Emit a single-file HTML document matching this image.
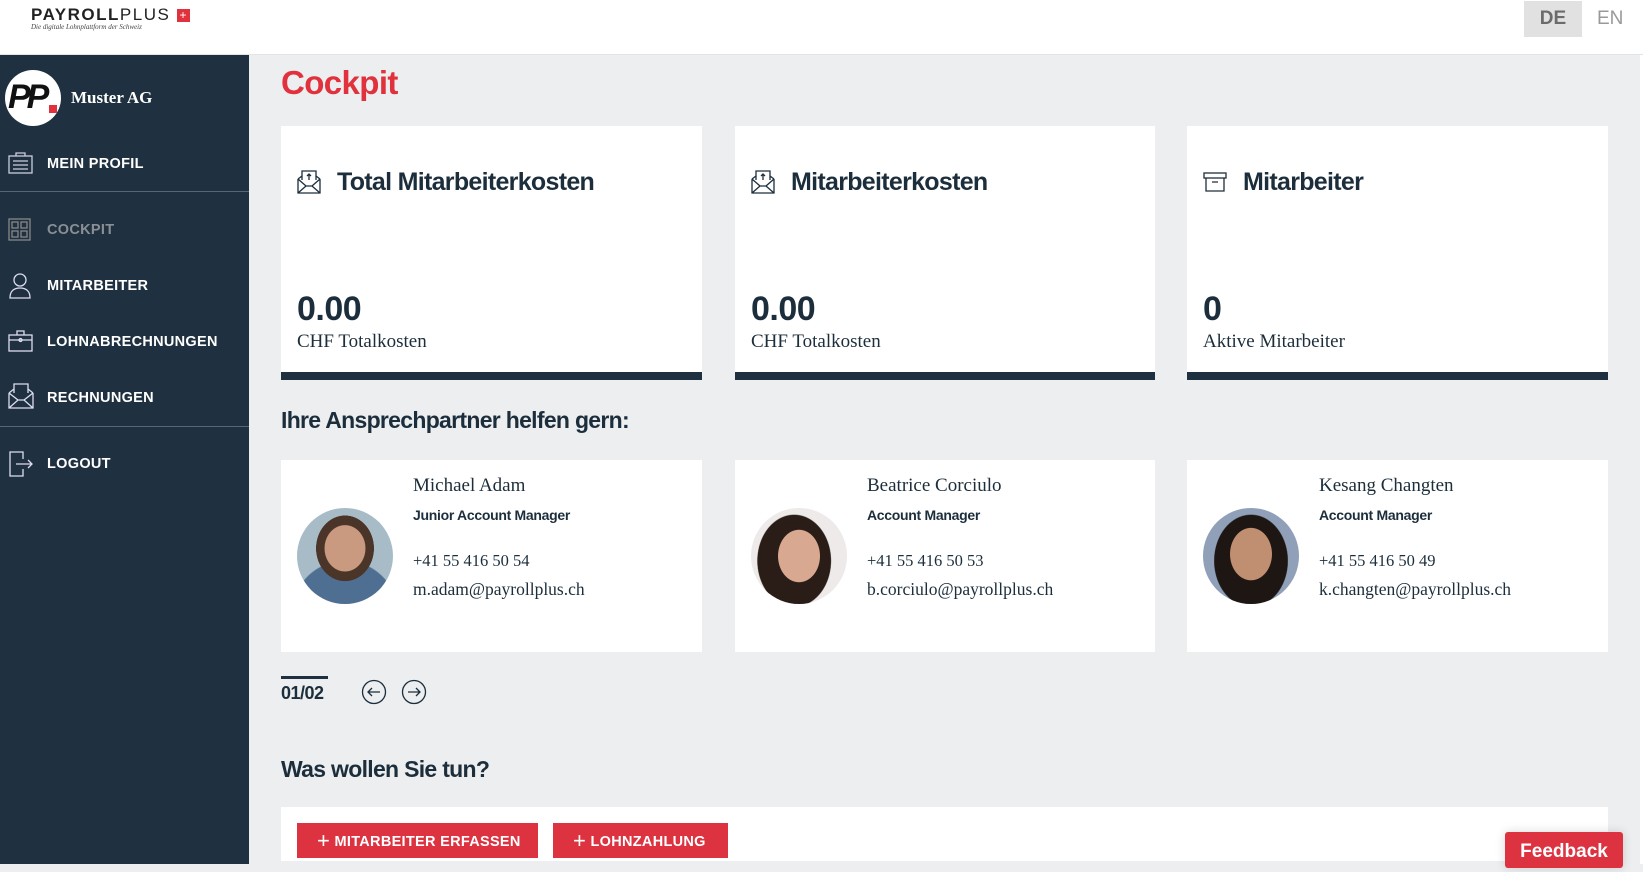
<!DOCTYPE html>
<html><head><meta charset="utf-8"><style>
*{margin:0;padding:0;box-sizing:border-box}
body{width:1643px;height:864px;overflow:hidden;background:#eceef0;font-family:"Liberation Sans",sans-serif;color:#1c2e3b;position:relative}
.abs{position:absolute}
.hdr{left:0;top:0;width:1643px;height:55px;background:#fff;border-bottom:1px solid #e2e4e6}
.side{left:0;top:55px;width:249px;height:809px;background:#1f3140}
.nav{position:absolute;left:47px;font-weight:bold;font-size:14.5px;letter-spacing:.3px;color:#fff}
.ico{position:absolute;left:8px}
.div{position:absolute;left:0;width:249px;height:1px;background:#55657a}
.card{background:#fff;border-bottom:8px solid #1f3140}
.ct{position:absolute;left:56px;top:42px;font-size:25px;font-weight:bold;letter-spacing:-.7px}
.ci{position:absolute;left:16px;top:44px}
.val{position:absolute;left:16px;top:164px;font-size:34px;font-weight:bold;letter-spacing:-.5px}
.sub{position:absolute;left:16px;top:205px;font-family:"Liberation Serif",serif;font-size:19px}
.pc{background:#fff}
.pc .ph{position:absolute;left:16px;top:48px;width:96px;height:96px;border-radius:50%}
.pc .n{position:absolute;left:132px;top:15px;font-family:"Liberation Serif",serif;font-size:19px}
.pc .r{position:absolute;left:132px;top:47px;font-size:14px;font-weight:bold;letter-spacing:-.3px}
.pc .t{position:absolute;left:132px;top:91px;font-family:"Liberation Serif",serif;font-size:16.5px}
.pc .e{position:absolute;left:132px;top:119px;font-family:"Liberation Serif",serif;font-size:17.5px}
.btn{background:#dd3340;color:#fff;font-weight:bold;font-size:14.5px;letter-spacing:.3px;height:35px;line-height:35px;top:823px}
</style></head><body>
<div class="abs hdr">
 <div class="abs" style="left:31px;top:5px;font-size:17px;letter-spacing:1.5px;color:#222"><b>PAYROLL</b>PLUS <span style="display:inline-block;width:13px;height:13px;background:#e0313c;color:#fff;font-size:12px;line-height:13px;text-align:center;letter-spacing:0;vertical-align:1px">+</span></div>
 <div class="abs" style="left:31px;top:23px;font-size:7px;font-style:italic;font-family:'Liberation Serif',serif;color:#444">Die digitale Lohnplattform der Schweiz</div>
 <div class="abs" style="left:1524px;top:1px;width:58px;height:36px;background:#e1e1e1;color:#6b6b6b;font-weight:bold;font-size:19px;text-align:center;line-height:36px">DE</div>
 <div class="abs" style="left:1597px;top:1px;height:36px;line-height:36px;color:#999;font-size:19px">EN</div>
</div>
<div class="abs" style="left:1640px;top:55px;width:3px;height:809px;background:#fff"></div>
<div class="abs side">
 <div class="abs" style="left:5px;top:15px;width:56px;height:56px;border-radius:50%;background:#fff;overflow:hidden"><div style="position:absolute;left:3px;top:8px;font-size:34px;font-weight:bold;color:#111;letter-spacing:-4px;font-style:italic">PP</div><div style="position:absolute;left:44px;top:35px;width:8px;height:8px;background:#e0313c"></div></div>
 <div class="abs" style="left:71px;top:33px;color:#fff;font-family:'Liberation Serif',serif;font-weight:bold;font-size:17px">Muster AG</div>
 <svg class="ico" style="top:97px" width="26" height="22" viewBox="0 0 26 22" fill="none" stroke="#ccd" stroke-width="1.3"><rect x="1" y="4" width="23" height="17"/><path d="M8 4V1h9v3M5 9h15M5 13h15M5 17h15"/></svg>
 <div class="nav" style="top:101px">MEIN PROFIL</div>
 <div class="div" style="top:136px"></div>
 <svg class="ico" style="top:163px" width="24" height="24" viewBox="0 0 24 24" fill="none" stroke="#888" stroke-width="1.3"><rect x="1" y="1" width="21" height="21"/><rect x="4" y="4" width="6" height="6"/><rect x="13" y="4" width="6" height="6"/><rect x="4" y="13" width="6" height="6"/><rect x="13" y="13" width="6" height="6"/></svg>
 <div class="nav" style="top:167px;color:#8a8f95">COCKPIT</div>
 <svg class="ico" style="top:218px" width="24" height="26" viewBox="0 0 24 26" fill="none" stroke="#dde" stroke-width="1.3"><circle cx="12" cy="7" r="6"/><path d="M2 25c0-7 4-10 10-10s10 3 10 10z"/></svg>
 <div class="nav" style="top:223px">MITARBEITER</div>
 <svg class="ico" style="top:275px" width="26" height="22" viewBox="0 0 26 22" fill="none" stroke="#dde" stroke-width="1.3"><rect x="1" y="5" width="23" height="16"/><path d="M9 5V1h7v4M1 10h23"/><circle cx="12.5" cy="10" r="1.5"/></svg>
 <div class="nav" style="top:279px">LOHNABRECHNUNGEN</div>
 <svg class="ico" style="top:328px" width="26" height="26" viewBox="0 0 26 26" fill="none" stroke="#dde" stroke-width="1.3"><path d="M6 10V1h14v9M1 10l5-4M25 10l-5-4M1 10v15h24V10M1 25l9-8h6l9 8M1 10l9 7M25 10l-9 7"/></svg>
 <div class="nav" style="top:335px">RECHNUNGEN</div>
 <div class="div" style="top:371px"></div>
 <svg class="ico" style="top:396px" width="26" height="26" viewBox="0 0 26 26" fill="none" stroke="#dde" stroke-width="1.3"><path d="M15 8V1H2v24h13v-7M8 13h16M20 9l4 4-4 4"/></svg>
 <div class="nav" style="top:401px">LOGOUT</div>
</div>
<div class="abs" style="left:281px;top:64px;font-size:33px;font-weight:bold;color:#e0313c;letter-spacing:-.6px">Cockpit</div>

<div class="abs card" style="left:281px;top:126px;width:421px;height:254px">
 <svg class="ci" width="24" height="24" viewBox="0 0 24 24" fill="none" stroke="#1c2e3b" stroke-width="1.3"><path d="M5 10V1h14v9M1 9l4-3M23 9l-4-3M1 9v14h22V9M1 23l8-7h6l8 7M1 9l8 7M23 9l-8 7M12 10V4M10 6l2-2 2 2"/></svg>
 <div class="ct">Total Mitarbeiterkosten</div><div class="val">0.00</div><div class="sub">CHF Totalkosten</div></div>
<div class="abs card" style="left:735px;top:126px;width:420px;height:254px">
 <svg class="ci" width="24" height="24" viewBox="0 0 24 24" fill="none" stroke="#1c2e3b" stroke-width="1.3"><path d="M5 10V1h14v9M1 9l4-3M23 9l-4-3M1 9v14h22V9M1 23l8-7h6l8 7M1 9l8 7M23 9l-8 7M12 10V4M10 6l2-2 2 2"/></svg>
 <div class="ct">Mitarbeiterkosten</div><div class="val">0.00</div><div class="sub">CHF Totalkosten</div></div>
<div class="abs card" style="left:1187px;top:126px;width:421px;height:254px">
 <svg class="ci" width="24" height="20" viewBox="0 0 24 20" fill="none" stroke="#1c2e3b" stroke-width="1.3" style="top:46px"><rect x="1" y="1" width="22" height="5"/><path d="M3 6v13h18V6M9 10h6"/></svg>
 <div class="ct">Mitarbeiter</div><div class="val">0</div><div class="sub">Aktive Mitarbeiter</div></div>

<div class="abs" style="left:281px;top:407px;font-size:23px;font-weight:bold;letter-spacing:-.7px">Ihre Ansprechpartner helfen gern:</div>

<div class="abs pc" style="left:281px;top:460px;width:421px;height:192px">
 <div class="ph" style="background:radial-gradient(ellipse 30% 34% at 50% 42%,#c99a80 0 70%,#4a3528 72% 100%,transparent 101%),radial-gradient(circle at 50% 110%,#4f6f92 0 45%,#a8bcc8 46%)"></div>
 <div class="n">Michael Adam</div><div class="r">Junior Account Manager</div><div class="t">+41 55 416 50 54</div><div class="e">m.adam@payrollplus.ch</div></div>
<div class="abs pc" style="left:735px;top:460px;width:420px;height:192px">
 <div class="ph" style="background:radial-gradient(ellipse 24% 30% at 50% 50%,#d9a890 0 90%,transparent 92%),radial-gradient(ellipse 40% 50% at 45% 55%,#2a1d18 0 95%,#eeeaea 97%)"></div>
 <div class="n">Beatrice Corciulo</div><div class="r">Account Manager</div><div class="t">+41 55 416 50 53</div><div class="e">b.corciulo@payrollplus.ch</div></div>
<div class="abs pc" style="left:1187px;top:460px;width:421px;height:192px">
 <div class="ph" style="background:radial-gradient(ellipse 24% 30% at 50% 48%,#c08e70 0 90%,transparent 92%),radial-gradient(ellipse 40% 50% at 50% 55%,#1e1612 0 95%,#8fa0b8 97%)"></div>
 <div class="n">Kesang Changten</div><div class="r">Account Manager</div><div class="t">+41 55 416 50 49</div><div class="e">k.changten@payrollplus.ch</div></div>

<div class="abs" style="left:281px;top:676px;width:47px;height:3px;background:#1f3140"></div>
<div class="abs" style="left:281px;top:683px;font-size:18px;font-weight:bold;letter-spacing:-.5px">01/02</div>
<svg class="abs" style="left:361px;top:679px" width="26" height="26" viewBox="0 0 26 26" fill="none" stroke="#1c2e3b" stroke-width="1.3"><circle cx="13" cy="13" r="11.5"/><path d="M19 13H7M11 9l-4 4 4 4"/></svg>
<svg class="abs" style="left:401px;top:679px" width="26" height="26" viewBox="0 0 26 26" fill="none" stroke="#1c2e3b" stroke-width="1.3"><circle cx="13" cy="13" r="11.5"/><path d="M7 13h12M15 9l4 4-4 4"/></svg>

<div class="abs" style="left:281px;top:756px;font-size:23px;font-weight:bold;letter-spacing:-.7px">Was wollen Sie tun?</div>
<div class="abs" style="left:281px;top:807px;width:1327px;height:54px;background:#fff"></div>
<div class="abs btn" style="left:297px;width:241px;padding-left:20px"><span style="font-size:22px;font-weight:normal;vertical-align:-2px">+</span> MITARBEITER ERFASSEN</div>
<div class="abs btn" style="left:553px;width:175px;padding-left:20px"><span style="font-size:22px;font-weight:normal;vertical-align:-2px">+</span> LOHNZAHLUNG</div>
<div class="abs" style="left:1505px;top:832px;width:118px;height:36px;background:#dd3340;border-radius:3px;color:#fff;font-size:19px;font-weight:bold;text-align:center;line-height:40px;box-shadow:0 0 10px rgba(0,0,0,.15)">Feedback</div>
</body></html>
